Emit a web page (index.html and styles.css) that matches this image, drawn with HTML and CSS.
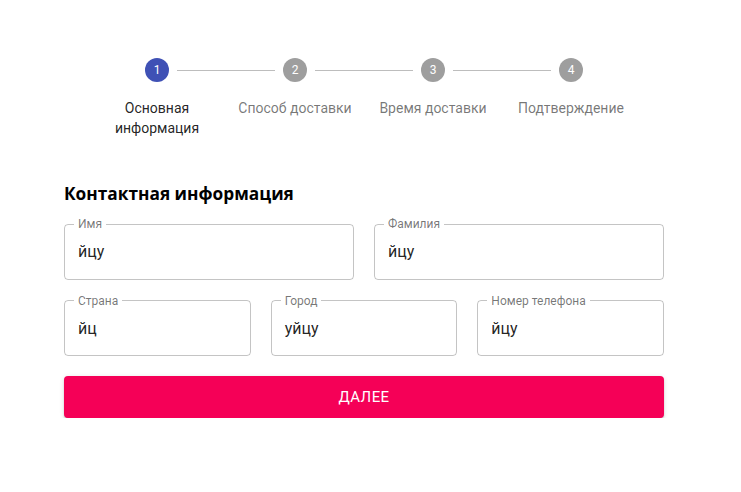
FILE: index.html
```html
<!DOCTYPE html>
<html lang="ru">
<head>
<meta charset="utf-8">
<link rel="stylesheet" href="styles.css">
</head>
<body>
<main class="page">
  <ol class="stepper">
    <li class="step active">
      <div class="step-head"><span class="circle">1</span></div>
      <div class="step-label">Основная информация</div>
    </li>
    <li class="step">
      <div class="step-head"><span class="line"></span><span class="circle">2</span></div>
      <div class="step-label">Способ доставки</div>
    </li>
    <li class="step">
      <div class="step-head"><span class="line"></span><span class="circle">3</span></div>
      <div class="step-label">Время доставки</div>
    </li>
    <li class="step">
      <div class="step-head"><span class="line"></span><span class="circle">4</span></div>
      <div class="step-label">Подтверждение</div>
    </li>
  </ol>

  <h3 class="title">Контактная информация</h3>

  <form class="form">
    <div class="row two">
      <fieldset class="field"><legend>Имя</legend><div class="value">йцу</div></fieldset>
      <fieldset class="field"><legend>Фамилия</legend><div class="value">йцу</div></fieldset>
    </div>
    <div class="row three">
      <fieldset class="field"><legend>Страна</legend><div class="value">йц</div></fieldset>
      <fieldset class="field"><legend>Город</legend><div class="value">уйцу</div></fieldset>
      <fieldset class="field"><legend>Номер телефона</legend><div class="value">йцу</div></fieldset>
    </div>
    <button type="button" class="next">Далее</button>
  </form>
</main>
</body>
</html>
```
FILE: styles.css
```css
* { box-sizing: border-box; }
html, body { margin: 0; padding: 0; background: #fff; }
body { font-family: Roboto, "Liberation Sans", sans-serif; color: rgba(0,0,0,0.87); }

.page { width: 600px; margin-left: 64px; padding-top: 34px; }

.stepper {
  list-style: none; margin: 0; padding: 24px;
  display: flex;
}
.step { flex: 1 1 0; display: flex; flex-direction: column; align-items: center; }
.step-head { position: relative; width: 100%; height: 24px; display: flex; justify-content: center; }
.line {
  position: absolute; top: 11.5px; height: 1px; background: #bdbdbd;
  left: calc(-50% + 20px); right: calc(50% + 20px);
}
.circle {
  width: 24px; height: 24px; border-radius: 50%;
  background: #9e9e9e; color: #fff;
  font-size: 12px; line-height: 24px; text-align: center;
}
.step.active .circle { background: #3f51b5; }
.step-label {
  margin-top: 16px; font-size: 14px; line-height: 20px; text-align: center;
  color: rgba(0,0,0,0.54); padding: 0 8px;
}
.step.active .step-label { color: rgba(0,0,0,0.87); }

.title {
  font-family: "Open Sans", "Noto Sans", sans-serif;
  font-size: 17.3px; font-weight: 700; line-height: 24px;
  margin: 20px 0 0; color: #000;
}

.form { margin-top: 11px; display: flex; flex-direction: column; }
.row { display: grid; gap: 20px; }
.row.two { grid-template-columns: 1fr 1fr; }
.row.three { grid-template-columns: 1fr 1fr 1fr; margin-top: 14px; }

.field {
  margin: 0; min-width: 0;
  padding: 0 13px;
  border: 1px solid rgba(0,0,0,0.23); border-radius: 4px;
}
.field legend {
  font-size: 12px; line-height: 14px; color: rgba(0,0,0,0.54);
  padding: 0 4px; margin-left: -4px;
}
.value {
  font-size: 16px; line-height: 19px;
  padding: 11px 0 17.5px;
  color: rgba(0,0,0,0.87);
}

.next {
  margin-top: 20px; height: 42px;
  border: 0; border-radius: 4px;
  background: #f50057; color: #fff;
  font-family: Roboto, "Liberation Sans", sans-serif;
  font-size: 15px; font-weight: 400; text-transform: uppercase;
  letter-spacing: 0.4px;
  box-shadow: 0 3px 1px -2px rgba(0,0,0,0.2), 0 2px 2px 0 rgba(0,0,0,0.14), 0 1px 5px 0 rgba(0,0,0,0.12);
}
```
